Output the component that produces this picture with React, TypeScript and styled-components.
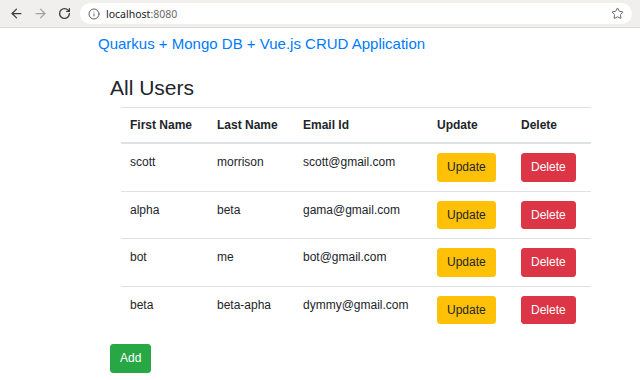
import React from 'react';
import styled, { createGlobalStyle } from 'styled-components';
import { ArrowLeft, ArrowRight, RotateCw, Info, Star } from 'lucide-react';

const GlobalStyle = createGlobalStyle`
  html, body {
    margin: 0;
    padding: 0;
    background: #ffffff;
  }

  body {
    font-family: 'Liberation Sans', Arial, sans-serif;
    color: #212529;
  }
`;

const BrowserBar = styled.div`
  height: 27px;
  display: flex;
  align-items: center;
  padding: 0 8px 0 4px;
  background-color: #f0efee;
  border-bottom: 1px solid #dcdbda;
`;

const NavButton = styled.div<{ $disabled?: boolean }>`
  width: 24px;
  height: 24px;
  display: flex;
  align-items: center;
  justify-content: center;
  color: ${(p) => (p.$disabled ? '#a3a3a3' : '#3c3c3c')};
`;

const AddressField = styled.div`
  flex: 1;
  height: 21px;
  margin-left: 4px;
  display: flex;
  align-items: center;
  gap: 6px;
  padding: 0 8px;
  background-color: #ffffff;
  border-radius: 11px;
  color: #505050;
`;

const Url = styled.span`
  flex: 1;
  font-family: 'Noto Sans', 'Liberation Sans', sans-serif;
  font-size: 10.5px;
  color: #202124;

  span {
    color: #6a6a6a;
  }
`;

const Main = styled.main`
  padding-left: 98px;
`;

const AppTitle = styled.div`
  margin-top: 7px;
  font-size: 15px;
  line-height: 18px;
  color: #007bff;
`;

const Content = styled.div`
  padding-left: 12px;
`;

const Heading = styled.h3`
  margin: 22px 0 7px;
  font-size: 21px;
  font-weight: 500;
  line-height: 25px;
`;

const Table = styled.table`
  margin: 0 0 11px 11px;
  width: 470px;
  border-collapse: separate;
  border-spacing: 0;
  font-size: 12px;
  line-height: 18px;

  th {
    padding: 8px 9px;
    text-align: left;
    font-weight: bold;
    border-top: 1px solid #dee2e6;
    border-bottom: 2px solid #dee2e6;
  }

  td {
    padding: 9px;
    vertical-align: top;
    border-top: 1px solid #dee2e6;
  }

  tbody tr:first-child td {
    border-top: none;
  }
`;

const variants = {
  warning: { bg: '#ffc107', fg: '#212529' },
  danger: { bg: '#dc3545', fg: '#ffffff' },
  success: { bg: '#28a745', fg: '#ffffff' },
};

const Button = styled.button<{ $variant: keyof typeof variants }>`
  display: inline-block;
  padding: 4.25px 9px;
  font-family: inherit;
  font-size: 12px;
  line-height: 18px;
  border-radius: 3px;
  border: 1px solid ${(p) => variants[p.$variant].bg};
  background-color: ${(p) => variants[p.$variant].bg};
  color: ${(p) => variants[p.$variant].fg};
  cursor: pointer;
`;

type User = {
  firstName: string;
  lastName: string;
  email: string;
};

const users: User[] = [
  { firstName: 'scott', lastName: 'morrison', email: 'scott@gmail.com' },
  { firstName: 'alpha', lastName: 'beta', email: 'gama@gmail.com' },
  { firstName: 'bot', lastName: 'me', email: 'bot@gmail.com' },
  { firstName: 'beta', lastName: 'beta-apha', email: 'dymmy@gmail.com' },
];

export default function App() {
  return (
    <>
      <GlobalStyle />
      <BrowserBar>
        <NavButton>
          <ArrowLeft size={15} strokeWidth={2} />
        </NavButton>
        <NavButton $disabled>
          <ArrowRight size={15} strokeWidth={2} />
        </NavButton>
        <NavButton>
          <RotateCw size={13} strokeWidth={2.4} />
        </NavButton>
        <AddressField>
          <Info size={12} strokeWidth={1.8} />
          <Url>
            localhost<span>:8080</span>
          </Url>
          <Star size={13} strokeWidth={1.6} />
        </AddressField>
      </BrowserBar>
      <Main>
        <AppTitle>Quarkus + Mongo DB + Vue.js CRUD Application</AppTitle>
        <Content>
          <Heading>All Users</Heading>
          <Table>
            <colgroup>
              <col style={{ width: 87 }} />
              <col style={{ width: 86 }} />
              <col style={{ width: 134 }} />
              <col style={{ width: 84 }} />
              <col style={{ width: 79 }} />
            </colgroup>
            <thead>
              <tr>
                <th>First Name</th>
                <th>Last Name</th>
                <th>Email Id</th>
                <th>Update</th>
                <th>Delete</th>
              </tr>
            </thead>
            <tbody>
              {users.map((user) => (
                <tr key={user.email}>
                  <td>{user.firstName}</td>
                  <td>{user.lastName}</td>
                  <td>{user.email}</td>
                  <td>
                    <Button $variant="warning">Update</Button>
                  </td>
                  <td>
                    <Button $variant="danger">Delete</Button>
                  </td>
                </tr>
              ))}
            </tbody>
          </Table>
          <Button $variant="success">Add</Button>
        </Content>
      </Main>
    </>
  );
}
